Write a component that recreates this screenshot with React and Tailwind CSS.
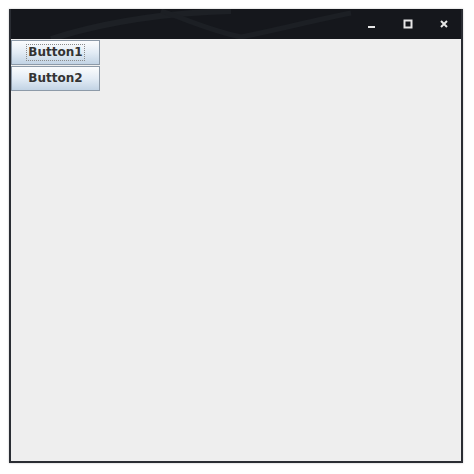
export default function App() {
  return (
    <div className="h-[474px] w-[474px] bg-white pl-[9px] pt-[9px]">
      <div className="flex h-[454px] w-[454px] flex-col border-x-2 border-b-2 border-[#2a2d33] bg-[#eeeeee] shadow-[0_0_2px_rgba(0,0,0,0.25)]">
        {/* title bar */}
        <div className="relative flex h-[30px] shrink-0 items-center justify-end overflow-hidden bg-[#15171c] pr-[12px]">
          <svg className="absolute left-0 top-0" width="454" height="30" viewBox="0 0 454 30">
            <path d="M40 30 C90 14 150 4 220 2" stroke="#1d2025" strokeWidth="6" fill="none" />
            <path d="M150 2 C180 12 200 22 230 28 C270 20 300 12 340 4" stroke="#1c1f24" strokeWidth="5" fill="none" />
          </svg>
          <div className="relative flex items-center gap-[26px]">
            <svg width="10" height="10" viewBox="0 0 10 10">
              <rect x="1" y="7" width="7" height="2" fill="#e6e6e6" />
            </svg>
            <svg width="10" height="10" viewBox="0 0 10 10">
              <rect x="1.5" y="1.5" width="7" height="7" stroke="#e6e6e6" strokeWidth="2" fill="none" />
            </svg>
            <svg width="10" height="10" viewBox="0 0 10 10">
              <path d="M2 2 L8 8 M8 2 L2 8" stroke="#e6e6e6" strokeWidth="2" />
            </svg>
          </div>
        </div>
        {/* content */}
        <div className="flex flex-col items-start pt-px">
          <button className="flex h-[25px] w-[89px] items-center justify-center border border-[#8d9aa8] bg-gradient-to-b from-[#fbfcfd] via-[#e3ecf5] to-[#c2d3e4] font-['DejaVu_Sans',sans-serif] text-[12px] font-bold text-[#333]">
            <span className="border border-dotted border-[#8a8a8a] px-[1px] leading-[15px]">Button1</span>
          </button>
          <button className="mt-px flex h-[25px] w-[89px] items-center justify-center border border-[#8d9aa8] bg-gradient-to-b from-[#fbfcfd] via-[#e3ecf5] to-[#c2d3e4] font-['DejaVu_Sans',sans-serif] text-[12px] font-bold text-[#333]">
            <span className="px-[2px] leading-[15px]">Button2</span>
          </button>
        </div>
      </div>
    </div>
  );
}
